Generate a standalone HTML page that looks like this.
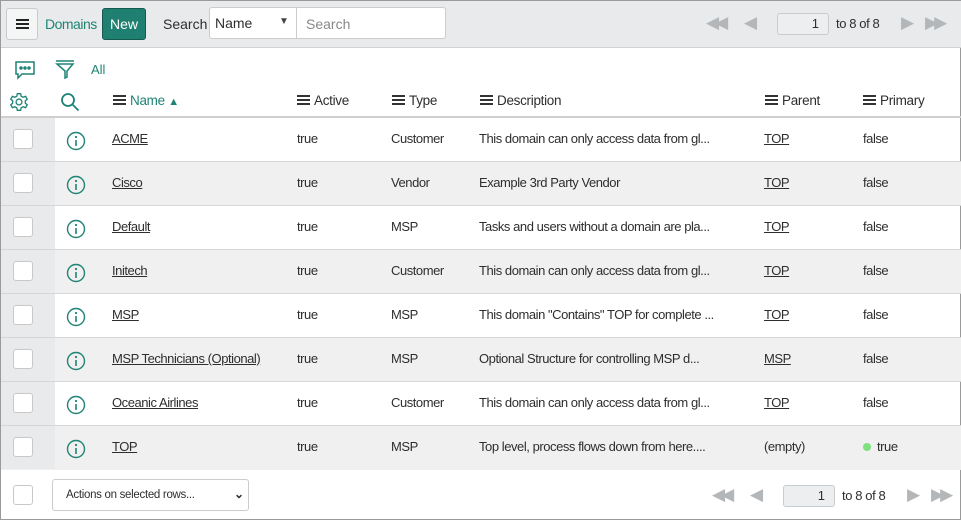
<!DOCTYPE html>
<html><head><style>
*{box-sizing:border-box;margin:0;padding:0}
body{width:961px;height:520px;font-family:"Liberation Sans",sans-serif;font-size:13px;color:#2e2e2e;background:#fff;position:relative;overflow:hidden;border:1px solid #9a9a9a}
.abs{position:absolute}
.hdr{left:0;top:0;width:961px;height:47px;background:#e9eaeb;border-bottom:1px solid #cfd1d3}
.btn{border:1px solid #c9ccce;border-radius:3px;background:#f4f5f5}
.teal{color:#1f8476}
.row{position:absolute;left:0;width:961px;height:44px;border-bottom:1px solid #d6d6d6}
.row .l{position:absolute;left:0;top:0;width:54px;height:43px;background:#e8eaec}
.cb{position:absolute;left:12px;width:20px;height:20px;background:#fff;border:1px solid #c8c8c8;border-radius:3px}
.t{position:absolute;top:13px;white-space:nowrap;letter-spacing:-0.45px}
u{text-decoration:underline}
.hd{position:absolute;top:92px;font-size:13.5px;white-space:nowrap;letter-spacing:-0.3px}
.bars{display:inline-block;width:13px;height:10px;border-top:2px solid #333;border-bottom:2px solid #333;position:relative;margin-right:4px;vertical-align:0}
.bars:after{content:"";position:absolute;left:0;right:0;top:2px;height:2px;background:#333}
.pg{color:#b4b7b9;font-size:17px;letter-spacing:-4px}
</style></head><body>
<div class="abs hdr"></div>
<div class="abs btn" style="left:5px;top:7px;width:32px;height:32px"><div class="abs" style="left:9px;top:10px;width:13px;height:10px;border-top:2px solid #222;border-bottom:2px solid #222"></div><div class="abs" style="left:9px;top:14px;width:13px;height:2px;background:#222"></div></div>
<div class="abs teal" style="left:44px;top:15px;font-size:14px;letter-spacing:-0.5px">Domains</div>
<div class="abs" style="left:101px;top:7px;width:44px;height:32px;background:#1f7f70;border:1px solid #15594f;border-radius:3px;color:#fff;font-size:14px;text-align:center;line-height:30px">New</div>
<div class="abs" style="left:162px;top:15px;font-size:14px">Search</div>
<div class="abs" style="left:208px;top:6px;width:237px;height:32px;background:#fff;border:1px solid #ccc;border-radius:3px"></div>
<div class="abs" style="left:295px;top:7px;width:1px;height:30px;background:#ccc"></div>
<div class="abs" style="left:214px;top:14px;font-size:14px">Name</div>
<div class="abs" style="left:278px;top:15px;font-size:10px;color:#444">▼</div>
<div class="abs" style="left:305px;top:15px;font-size:14px;color:#888">Search</div>
<div class="abs pg" style="left:705px;top:12px">◀◀</div>
<div class="abs pg" style="left:743px;top:12px">◀</div>
<div class="abs" style="left:776px;top:12px;width:52px;height:22px;border:1px solid #c9ccce;border-radius:3px;background:#eceeef;text-align:right;padding-right:9px;line-height:20px">1</div>
<div class="abs" style="left:835px;top:15px;letter-spacing:-0.4px">to 8 of 8</div>
<div class="abs pg" style="left:900px;top:12px">▶</div>
<div class="abs pg" style="left:924px;top:12px">▶▶</div>

<svg class="abs" style="left:13px;top:59px" width="22" height="20" viewBox="0 0 22 20" fill="none" stroke="#1f8476" stroke-width="1.5"><path d="M2 2h18v12H8l-4 4v-4H2z"/><circle cx="7" cy="8" r="1" fill="#1f8476"/><circle cx="11" cy="8" r="1" fill="#1f8476"/><circle cx="15" cy="8" r="1" fill="#1f8476"/></svg>
<svg class="abs" style="left:54px;top:58px" width="20" height="22" viewBox="0 0 20 22" fill="none" stroke="#1f8476" stroke-width="1.5"><path d="M1 2h18M2 5h16l-6 7v6l-2 1v-7z"/></svg>
<div class="abs teal" style="left:90px;top:61px">All</div>
<svg class="abs" style="left:8px;top:91px" width="20" height="20" viewBox="0 0 24 24" fill="none" stroke="#1f8476" stroke-width="1.6"><circle cx="12" cy="12" r="3.5"/><path d="M10 2h4l.6 3 2.4 1.3 2.9-1.1 2 3.4-2.3 2v2.8l2.3 2-2 3.4-2.9-1.1L14.6 19 14 22h-4l-.6-3-2.4-1.3-2.9 1.1-2-3.4 2.3-2v-2.8l-2.3-2 2-3.4 2.9 1.1L9.4 5z"/></svg>
<svg class="abs" style="left:59px;top:91px" width="20" height="20" viewBox="0 0 20 20" fill="none" stroke="#1f8476" stroke-width="1.8"><circle cx="8" cy="8" r="6"/><path d="M12.5 12.5l6 6"/></svg>
<div class="hd teal" style="left:112px"><span class="bars"></span>Name <span style="font-size:11px">▲</span></div>
<div class="hd" style="left:296px"><span class="bars"></span>Active</div>
<div class="hd" style="left:391px"><span class="bars"></span>Type</div>
<div class="hd" style="left:479px"><span class="bars"></span>Description</div>
<div class="hd" style="left:764px"><span class="bars"></span>Parent</div>
<div class="hd" style="left:862px"><span class="bars"></span>Primary</div>
<div class="abs" style="left:0;top:115px;width:961px;height:2px;background:#cfcfcf"></div>

<div class="row" style="top:117px"><div class="l"></div><div class="cb" style="top:11px"></div><svg class="abs" style="left:65px;top:13px" width="20" height="20" viewBox="0 0 20 20"><circle cx="10" cy="10" r="8.5" fill="none" stroke="#1f8476" stroke-width="1.4"/><circle cx="10" cy="6" r="1.1" fill="#1f8476"/><path d="M10 9v6" stroke="#1f8476" stroke-width="1.6"/></svg><div class="t" style="left:111px"><u>ACME</u></div><div class="t" style="left:296px">true</div><div class="t" style="left:390px">Customer</div><div class="t" style="left:478px">This domain can only access data from gl...</div><div class="t" style="left:763px"><u>TOP</u></div><div class="t" style="left:862px">false</div></div>
<div class="row" style="top:161px;background:#f0f0f0"><div class="l"></div><div class="cb" style="top:11px"></div><svg class="abs" style="left:65px;top:13px" width="20" height="20" viewBox="0 0 20 20"><circle cx="10" cy="10" r="8.5" fill="none" stroke="#1f8476" stroke-width="1.4"/><circle cx="10" cy="6" r="1.1" fill="#1f8476"/><path d="M10 9v6" stroke="#1f8476" stroke-width="1.6"/></svg><div class="t" style="left:111px"><u>Cisco</u></div><div class="t" style="left:296px">true</div><div class="t" style="left:390px">Vendor</div><div class="t" style="left:478px">Example 3rd Party Vendor</div><div class="t" style="left:763px"><u>TOP</u></div><div class="t" style="left:862px">false</div></div>
<div class="row" style="top:205px"><div class="l"></div><div class="cb" style="top:11px"></div><svg class="abs" style="left:65px;top:13px" width="20" height="20" viewBox="0 0 20 20"><circle cx="10" cy="10" r="8.5" fill="none" stroke="#1f8476" stroke-width="1.4"/><circle cx="10" cy="6" r="1.1" fill="#1f8476"/><path d="M10 9v6" stroke="#1f8476" stroke-width="1.6"/></svg><div class="t" style="left:111px"><u>Default</u></div><div class="t" style="left:296px">true</div><div class="t" style="left:390px">MSP</div><div class="t" style="left:478px">Tasks and users without a domain are pla...</div><div class="t" style="left:763px"><u>TOP</u></div><div class="t" style="left:862px">false</div></div>
<div class="row" style="top:249px;background:#f0f0f0"><div class="l"></div><div class="cb" style="top:11px"></div><svg class="abs" style="left:65px;top:13px" width="20" height="20" viewBox="0 0 20 20"><circle cx="10" cy="10" r="8.5" fill="none" stroke="#1f8476" stroke-width="1.4"/><circle cx="10" cy="6" r="1.1" fill="#1f8476"/><path d="M10 9v6" stroke="#1f8476" stroke-width="1.6"/></svg><div class="t" style="left:111px"><u>Initech</u></div><div class="t" style="left:296px">true</div><div class="t" style="left:390px">Customer</div><div class="t" style="left:478px">This domain can only access data from gl...</div><div class="t" style="left:763px"><u>TOP</u></div><div class="t" style="left:862px">false</div></div>
<div class="row" style="top:293px"><div class="l"></div><div class="cb" style="top:11px"></div><svg class="abs" style="left:65px;top:13px" width="20" height="20" viewBox="0 0 20 20"><circle cx="10" cy="10" r="8.5" fill="none" stroke="#1f8476" stroke-width="1.4"/><circle cx="10" cy="6" r="1.1" fill="#1f8476"/><path d="M10 9v6" stroke="#1f8476" stroke-width="1.6"/></svg><div class="t" style="left:111px"><u>MSP</u></div><div class="t" style="left:296px">true</div><div class="t" style="left:390px">MSP</div><div class="t" style="left:478px">This domain "Contains" TOP for complete ...</div><div class="t" style="left:763px"><u>TOP</u></div><div class="t" style="left:862px">false</div></div>
<div class="row" style="top:337px;background:#f0f0f0"><div class="l"></div><div class="cb" style="top:11px"></div><svg class="abs" style="left:65px;top:13px" width="20" height="20" viewBox="0 0 20 20"><circle cx="10" cy="10" r="8.5" fill="none" stroke="#1f8476" stroke-width="1.4"/><circle cx="10" cy="6" r="1.1" fill="#1f8476"/><path d="M10 9v6" stroke="#1f8476" stroke-width="1.6"/></svg><div class="t" style="left:111px"><u>MSP Technicians (Optional)</u></div><div class="t" style="left:296px">true</div><div class="t" style="left:390px">MSP</div><div class="t" style="left:478px">Optional Structure for controlling MSP d...</div><div class="t" style="left:763px"><u>MSP</u></div><div class="t" style="left:862px">false</div></div>
<div class="row" style="top:381px"><div class="l"></div><div class="cb" style="top:11px"></div><svg class="abs" style="left:65px;top:13px" width="20" height="20" viewBox="0 0 20 20"><circle cx="10" cy="10" r="8.5" fill="none" stroke="#1f8476" stroke-width="1.4"/><circle cx="10" cy="6" r="1.1" fill="#1f8476"/><path d="M10 9v6" stroke="#1f8476" stroke-width="1.6"/></svg><div class="t" style="left:111px"><u>Oceanic Airlines</u></div><div class="t" style="left:296px">true</div><div class="t" style="left:390px">Customer</div><div class="t" style="left:478px">This domain can only access data from gl...</div><div class="t" style="left:763px"><u>TOP</u></div><div class="t" style="left:862px">false</div></div>
<div class="row" style="top:425px;background:#f0f0f0;border-bottom:none"><div class="l"></div><div class="cb" style="top:11px"></div><svg class="abs" style="left:65px;top:13px" width="20" height="20" viewBox="0 0 20 20"><circle cx="10" cy="10" r="8.5" fill="none" stroke="#1f8476" stroke-width="1.4"/><circle cx="10" cy="6" r="1.1" fill="#1f8476"/><path d="M10 9v6" stroke="#1f8476" stroke-width="1.6"/></svg><div class="t" style="left:111px"><u>TOP</u></div><div class="t" style="left:296px">true</div><div class="t" style="left:390px">MSP</div><div class="t" style="left:478px">Top level, process flows down from here....</div><div class="t" style="left:763px">(empty)</div><div class="abs" style="left:862px;top:17px;width:8px;height:8px;border-radius:50%;background:#7fe07f"></div><div class="t" style="left:876px">true</div></div>

<div class="cb" style="top:484px"></div>
<div class="abs" style="left:51px;top:478px;width:197px;height:32px;border:1px solid #ccc;border-radius:3px;background:#fff"><span class="abs" style="left:13px;top:9px;font-size:11.5px;letter-spacing:-0.3px">Actions on selected rows...</span><span class="abs" style="left:181px;top:7px;font-size:12px;font-weight:bold">⌄</span></div>
<div class="abs pg" style="left:711px;top:484px">◀◀</div>
<div class="abs pg" style="left:749px;top:484px">◀</div>
<div class="abs" style="left:782px;top:484px;width:52px;height:22px;border:1px solid #c9ccce;border-radius:3px;background:#eceeef;text-align:right;padding-right:9px;line-height:20px">1</div>
<div class="abs" style="left:841px;top:487px;letter-spacing:-0.4px">to 8 of 8</div>
<div class="abs pg" style="left:906px;top:484px">▶</div>
<div class="abs pg" style="left:930px;top:484px">▶▶</div>
</body></html>
